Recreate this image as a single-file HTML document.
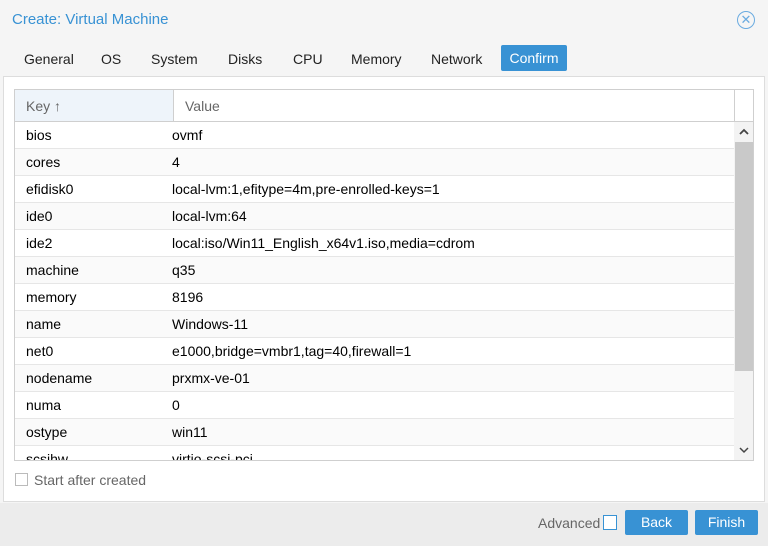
<!DOCTYPE html>
<html><head><style>
*{box-sizing:border-box;margin:0;padding:0}
body{width:768px;height:546px;background:#f5f5f5;font-family:"Liberation Sans",sans-serif;position:relative;overflow:hidden;color:#000}
.abs{position:absolute}
.title{left:12px;top:11px;font-size:15px;color:#3892d4}
.close{left:737px;top:11px;width:18px;height:18px;border:1.5px solid #6aabe0;border-radius:50%;color:#6aabe0;font-size:13px;line-height:15px;text-align:center}
.tab{top:51px;font-size:14px;color:#222}
.confirm{left:501px;top:45px;width:66px;height:26px;background:#3892d4;color:#fff;font-size:14px;line-height:26px;text-align:center;border-radius:2px}
.panel{left:3px;top:76px;width:762px;height:426px;background:#fff;border:1px solid #ddd}
.grid{left:14px;top:89px;width:740px;height:372px;border:1px solid #cfcfcf;overflow:hidden;background:#fff}
.hdr{position:absolute;left:0;top:0;height:32px;width:740px;border-bottom:1px solid #cfcfcf;font-size:14px;color:#666}
.row{position:absolute;left:0;width:719px;height:27px;border-bottom:1px solid #e6e6e6;font-size:14px;line-height:26px}
.row span{position:absolute;left:157px}
.row b{font-weight:normal;position:absolute;left:11px}
.alt{background:#fafafa}
</style></head><body>
<div class="abs title">Create: Virtual Machine</div>
<div class="abs close">✕</div>
<div class="abs tab" style="left:24px">General</div>
<div class="abs tab" style="left:101px">OS</div>
<div class="abs tab" style="left:151px">System</div>
<div class="abs tab" style="left:228px">Disks</div>
<div class="abs tab" style="left:293px">CPU</div>
<div class="abs tab" style="left:351px">Memory</div>
<div class="abs tab" style="left:431px">Network</div>
<div class="abs confirm">Confirm</div>
<div class="abs panel"></div>
<div class="abs grid">
 <div class="hdr">
  <div style="position:absolute;left:0;top:0;width:159px;height:31px;background:#eef4fa;border-right:1px solid #cfcfcf;padding:8px 11px">Key ↑</div>
  <div style="position:absolute;left:170px;top:8px">Value</div>
  <div style="position:absolute;left:719px;top:0;width:1px;height:31px;background:#cfcfcf"></div>
 </div>
 <div class="row" style="top:32px"><b>bios</b><span>ovmf</span></div>
 <div class="row alt" style="top:59px"><b>cores</b><span>4</span></div>
 <div class="row" style="top:86px"><b>efidisk0</b><span>local-lvm:1,efitype=4m,pre-enrolled-keys=1</span></div>
 <div class="row alt" style="top:113px"><b>ide0</b><span>local-lvm:64</span></div>
 <div class="row" style="top:140px"><b>ide2</b><span>local:iso/Win11_English_x64v1.iso,media=cdrom</span></div>
 <div class="row alt" style="top:167px"><b>machine</b><span>q35</span></div>
 <div class="row" style="top:194px"><b>memory</b><span>8196</span></div>
 <div class="row alt" style="top:221px"><b>name</b><span>Windows-11</span></div>
 <div class="row" style="top:248px"><b>net0</b><span>e1000,bridge=vmbr1,tag=40,firewall=1</span></div>
 <div class="row alt" style="top:275px"><b>nodename</b><span>prxmx-ve-01</span></div>
 <div class="row" style="top:302px"><b>numa</b><span>0</span></div>
 <div class="row alt" style="top:329px"><b>ostype</b><span>win11</span></div>
 <div class="row" style="top:356px"><b>scsihw</b><span>virtio-scsi-pci</span></div>
 <div style="position:absolute;left:719px;top:32px;width:19px;height:340px;background:#f3f3f3"></div>
 <div style="position:absolute;left:720px;top:52px;width:18px;height:229px;background:#c9c9c9"></div>
 <svg style="position:absolute;left:720px;top:35px" width="18" height="14"><path d="M5 9 L9 5 L13 9" fill="none" stroke="#444" stroke-width="1.8"/></svg>
 <svg style="position:absolute;left:720px;top:353px" width="18" height="14"><path d="M5 5 L9 9 L13 5" fill="none" stroke="#444" stroke-width="1.5"/></svg>
</div>
<div class="abs" style="left:15px;top:473px;width:13px;height:13px;border:1px solid #bbb;background:#fff"></div>
<div class="abs" style="left:34px;top:472px;font-size:14px;color:#666">Start after created</div>
<div class="abs" style="left:0;top:503px;width:768px;height:43px;background:#ececec"></div>
<div class="abs" style="left:538px;top:515px;font-size:14px;color:#666">Advanced</div>
<div class="abs" style="left:603px;top:515px;width:14px;height:15px;border:1px solid #3892d4;background:#fff"></div>
<div class="abs" style="left:625px;top:510px;width:63px;height:25px;background:#3892d4;color:#fff;font-size:14px;line-height:25px;text-align:center;border-radius:2px">Back</div>
<div class="abs" style="left:695px;top:510px;width:63px;height:25px;background:#3892d4;color:#fff;font-size:14px;line-height:25px;text-align:center;border-radius:2px">Finish</div>
</body></html>
